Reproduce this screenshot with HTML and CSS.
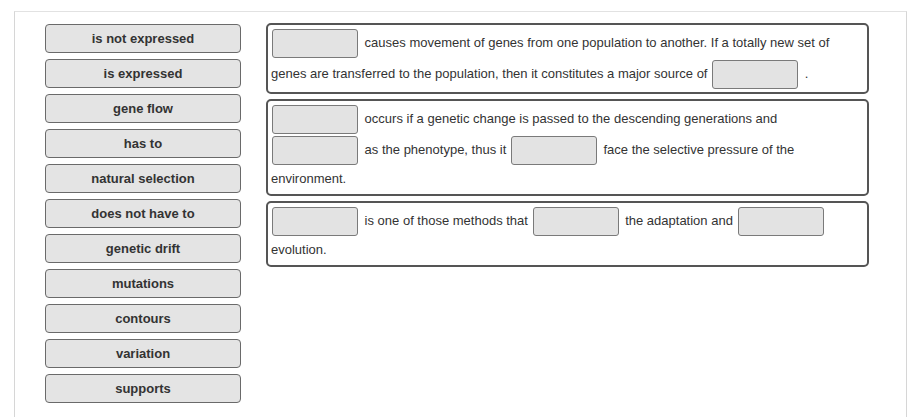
FILE: index.html
```html
<!DOCTYPE html>
<html lang="en">
<head>
    <meta charset="UTF-8">
    <title>Drag and drop</title>
    <link rel="stylesheet" href="styles.css">
</head>
<body>
    <div class="frame">
        <div class="question">
            <div class="bank">
                <div class="tile">is not expressed</div>
                <div class="tile">is expressed</div>
                <div class="tile">gene flow</div>
                <div class="tile">has to</div>
                <div class="tile">natural selection</div>
                <div class="tile">does not have to</div>
                <div class="tile">genetic drift</div>
                <div class="tile">mutations</div>
                <div class="tile">contours</div>
                <div class="tile">variation</div>
                <div class="tile">supports</div>
            </div>
            <div class="sentences">
                <div class="sentence"><span class="blank"></span> causes movement of genes from one population to another. If a totally new set of genes are transferred to the population, then it constitutes a major source of <span class="blank"></span> .</div>
                <div class="sentence"><span class="blank"></span> occurs if a genetic change is passed to the descending generations and <span class="blank"></span> as the phenotype, thus it <span class="blank"></span> face the selective pressure of the environment.</div>
                <div class="sentence"><span class="blank"></span> is one of those methods that <span class="blank"></span> the adaptation and <span class="blank"></span> evolution.</div>
            </div>
        </div>
    </div>
</body>
</html>
```

FILE: styles.css
```css
body {
    margin: 0;
    background: #fff;
    font-family: "Liberation Sans", Arial, sans-serif;
    color: #333;
}
.frame {
    margin: 11px 3px 0 14px;
    border-top: 1px solid #e2e2e2;
    border-left: 1px solid #d6d6d6;
    border-right: 1px solid #d6d6d6;
    height: 406px;
    box-sizing: border-box;
}
.question {
    display: flex;
    gap: 25px;
    padding: 12px 0 0 30px;
}
.bank {
    display: flex;
    flex-direction: column;
    gap: 6px;
    width: 196px;
}
.tile {
    height: 29px;
    box-sizing: border-box;
    border: 1.5px solid #6a6a6a;
    border-radius: 4px;
    background: #e4e4e4;
    font-size: 13px;
    font-weight: bold;
    text-align: center;
    line-height: 27px;
    color: #333;
}
.sentences {
    display: flex;
    flex-direction: column;
    gap: 5px;
    width: 603px;
    margin-top: -1px;
}
.sentence {
    border: 2px solid #555;
    border-radius: 5px;
    padding: 3px 20px 2px 3px;
    font-size: 13px;
    line-height: 26px;
}
.blank {
    display: inline-block;
    vertical-align: middle;
    width: 86px;
    height: 29px;
    box-sizing: border-box;
    margin: 1px 3px 1px 1px;
    border: 1px solid #7a7a7a;
    border-radius: 3px;
    background: #e3e3e3;
}
```
